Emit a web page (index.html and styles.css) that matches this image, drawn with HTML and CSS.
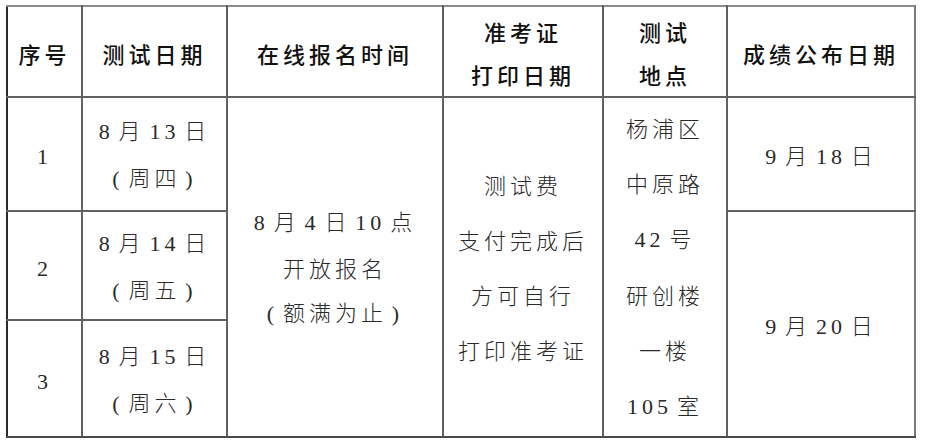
FILE: index.html
```html
<!DOCTYPE html>
<html lang="zh-CN">
<head>
<meta charset="utf-8">
<title>测试安排</title>
<link rel="stylesheet" href="styles.css">
</head>
<body>
<table class="schedule">
  <colgroup>
    <col class="c1"><col class="c2"><col class="c3"><col class="c4"><col class="c5"><col class="c6">
  </colgroup>
  <thead>
    <tr class="head">
      <th>序号</th>
      <th>测试日期</th>
      <th>在线报名时间</th>
      <th>准考证<br>打印日期</th>
      <th>测试<br>地点</th>
      <th>成绩公布日期</th>
    </tr>
  </thead>
  <tbody>
    <tr class="r1">
      <td class="num"><span class="d">1</span></td>
      <td class="date"><span class="d">8</span> 月 <span class="d">13</span> 日<br><span class="d">(</span> 周四 <span class="d">)</span></td>
      <td class="reg" rowspan="3"><span class="d">8</span> 月 <span class="d">4</span> 日 <span class="d">10</span> 点<br>开放报名<br><span class="d">(</span> 额满为止 <span class="d">)</span></td>
      <td class="tall" rowspan="3">测试费<br>支付完成后<br>方可自行<br>打印准考证</td>
      <td class="tall" rowspan="3">杨浦区<br>中原路<br><span class="d">42</span> 号<br>研创楼<br>一楼<br><span class="d">105</span> 室</td>
      <td class="result"><span class="d">9</span> 月 <span class="d">18</span> 日</td>
    </tr>
    <tr class="r2">
      <td class="num"><span class="d">2</span></td>
      <td class="date"><span class="d">8</span> 月 <span class="d">14</span> 日<br><span class="d">(</span> 周五 <span class="d">)</span></td>
      <td class="result" rowspan="2"><span class="d">9</span> 月 <span class="d">20</span> 日</td>
    </tr>
    <tr class="r3">
      <td class="num"><span class="d">3</span></td>
      <td class="date"><span class="d">8</span> 月 <span class="d">15</span> 日<br><span class="d">(</span> 周六 <span class="d">)</span></td>
    </tr>
  </tbody>
</table>
</body>
</html>
```
FILE: styles.css
```css
html, body {
  margin: 0;
  padding: 0;
  background: #ffffff;
}

.schedule {
  margin: 5px 0 0 6px;
  border-collapse: collapse;
  table-layout: fixed;
  width: 908px;
  font-family: "Noto Sans CJK SC", sans-serif;
  font-size: 22px;
  color: #2a2a2a;
}

.d {
  font-family: "Liberation Serif", "Times New Roman", serif;
  font-weight: 400;
}

.c1 { width: 75px; }
.c2 { width: 145px; }
.c3 { width: 216px; }
.c4 { width: 160px; }
.c5 { width: 124px; }
.c6 { width: 188px; }

.schedule th,
.schedule td {
  border: 2px solid #616161;
  padding: 0;
  text-align: center;
  vertical-align: middle;
  letter-spacing: 4px;
  word-spacing: -4px;
}

.schedule thead th {
  border-top: 2px solid #8c8c8c;
  font-weight: 500;
  color: #111111;
  line-height: 43px;
  padding-top: 3px;
}

.schedule th:first-child,
.schedule td:first-child {
  border-left: 2px solid #2b2b2b;
}

.schedule th:last-child,
.schedule td.result {
  border-right: 2px solid #7a7a7a;
}

.schedule tbody td {
  font-weight: 300;
}

.head { height: 91px; }
.r1 { height: 114px; }
.r2 { height: 109px; }
.r3 { height: 117px; }

.r3 td,
.schedule td[rowspan="3"],
.schedule td[rowspan="2"] {
  border-bottom: 2px solid #4a4a4a;
}

.date { line-height: 44px; padding-top: 6px; }
.reg { line-height: 44px; padding-bottom: 8px; }
.tall { line-height: 55px; padding-top: 2px; }
.num { letter-spacing: 0; padding-top: 10px; }
.result { padding-bottom: 2px; }
```
